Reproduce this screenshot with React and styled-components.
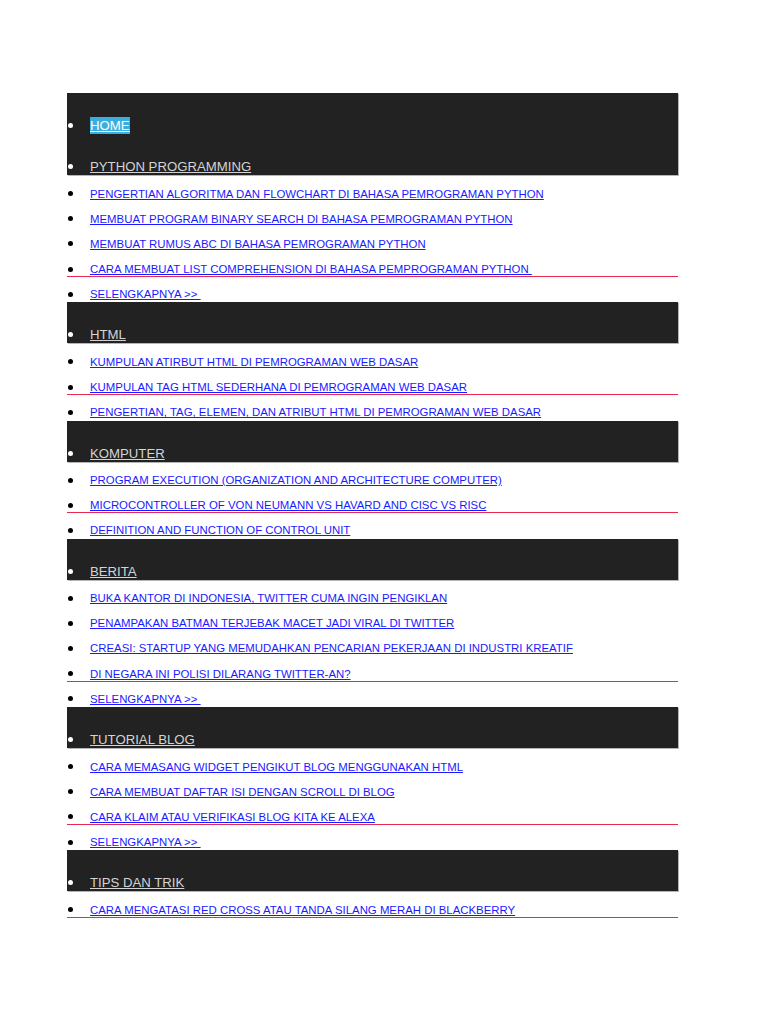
import styled, { createGlobalStyle } from "styled-components";

const GlobalStyle = createGlobalStyle`
  html, body {
    margin: 0;
    padding: 0;
    background: #fff;
  }
  body {
    font-family: "Liberation Sans", Arial, sans-serif;
  }
`;

const Page = styled.div`
  padding: 93px 0 40px 67px;
`;

const Menu = styled.ul`
  list-style: none;
  margin: 0;
  padding: 0;
  width: 611px;
`;

const Section = styled.li`
  list-style: none;
`;

const Bar = styled.div`
  background: #222;
  box-shadow: 1px 1px 0 #b5b5b5;
`;

const HeaderRow = styled.div`
  display: flex;
  align-items: center;
  padding: 24px 0 0;
  line-height: 17px;
  font-size: 13.2px;
`;

const Bullet = styled.span`
  flex: none;
  width: 23px;
  display: flex;
  align-items: center;
  &::before {
    content: "";
    display: block;
    width: 5px;
    height: 5px;
    margin-left: 1px;
    border-radius: 50%;
    background: ${(p) => (p.$light ? "#fff" : "#000")};
  }
`;

const HeaderLink = styled.a`
  color: ${(p) => (p.$active ? "#fff" : "#d4d4d4")};
  background: ${(p) => (p.$active ? "#3aaede" : "transparent")};
  text-decoration: underline;
  cursor: pointer;
`;

const SubList = styled.ul`
  list-style: none;
  margin: 0;
  padding: 1.5px 0 0;
`;

const SubItem = styled.li`
  display: flex;
  align-items: center;
  padding: 10px 0 0.2px;
  line-height: 14px;
  font-size: 11.4px;
  border-bottom: 1px solid ${(p) => (p.$rule ? "#e8294f" : "transparent")};
`;

const SubLink = styled.a`
  color: #1a1aff;
  text-decoration: underline;
  white-space: nowrap;
  cursor: pointer;
`;

const sections = [
  {
    title: "PYTHON PROGRAMMING",
    rule: 3,
    items: [
      "PENGERTIAN ALGORITMA DAN FLOWCHART DI BAHASA PEMROGRAMAN PYTHON",
      "MEMBUAT PROGRAM BINARY SEARCH DI BAHASA PEMROGRAMAN PYTHON",
      "MEMBUAT RUMUS ABC DI BAHASA PEMROGRAMAN PYTHON",
      "CARA MEMBUAT LIST COMPREHENSION DI BAHASA PEMPROGRAMAN PYTHON\u00a0",
      "SELENGKAPNYA >>\u00a0",
    ],
  },
  {
    title: "HTML",
    rule: 1,
    items: [
      "KUMPULAN ATIRBUT HTML DI PEMROGRAMAN WEB DASAR",
      "KUMPULAN TAG HTML SEDERHANA DI PEMROGRAMAN WEB DASAR",
      "PENGERTIAN, TAG, ELEMEN, DAN ATRIBUT HTML DI PEMROGRAMAN WEB DASAR",
    ],
  },
  {
    title: "KOMPUTER",
    rule: 1,
    items: [
      "PROGRAM EXECUTION (ORGANIZATION AND ARCHITECTURE COMPUTER)",
      "MICROCONTROLLER OF VON NEUMANN VS HAVARD AND CISC VS RISC",
      "DEFINITION AND FUNCTION OF CONTROL UNIT",
    ],
  },
  {
    title: "BERITA",
    rule: 3,
    items: [
      "BUKA KANTOR DI INDONESIA, TWITTER CUMA INGIN PENGIKLAN",
      "PENAMPAKAN BATMAN TERJEBAK MACET JADI VIRAL DI TWITTER",
      "CREASI: STARTUP YANG MEMUDAHKAN PENCARIAN PEKERJAAN DI INDUSTRI KREATIF",
      "DI NEGARA INI POLISI DILARANG TWITTER-AN?",
      "SELENGKAPNYA >>\u00a0",
    ],
  },
  {
    title: "TUTORIAL BLOG",
    rule: 2,
    items: [
      "CARA MEMASANG WIDGET PENGIKUT BLOG MENGGUNAKAN HTML",
      "CARA MEMBUAT DAFTAR ISI DENGAN SCROLL DI BLOG",
      "CARA KLAIM ATAU VERIFIKASI BLOG KITA KE ALEXA",
      "SELENGKAPNYA >>\u00a0",
    ],
  },
  {
    title: "TIPS DAN TRIK",
    rule: 0,
    items: ["CARA MENGATASI RED CROSS ATAU TANDA SILANG MERAH DI BLACKBERRY"],
  },
];

const Header = ({ label, active }) => (
  <HeaderRow>
    <Bullet $light />
    <HeaderLink $active={active}>{label}</HeaderLink>
  </HeaderRow>
);

export default function App() {
  return (
    <>
      <GlobalStyle />
      <Page>
        <Menu>
          {sections.map((s, i) => (
            <Section key={s.title}>
              <Bar>
                {i === 0 && <Header label="HOME" active />}
                <Header label={s.title} />
              </Bar>
              <SubList>
                {s.items.map((t, j) => (
                  <SubItem key={t} $rule={j === s.rule}>
                    <Bullet />
                    <SubLink>{t}</SubLink>
                  </SubItem>
                ))}
              </SubList>
            </Section>
          ))}
        </Menu>
      </Page>
    </>
  );
}
